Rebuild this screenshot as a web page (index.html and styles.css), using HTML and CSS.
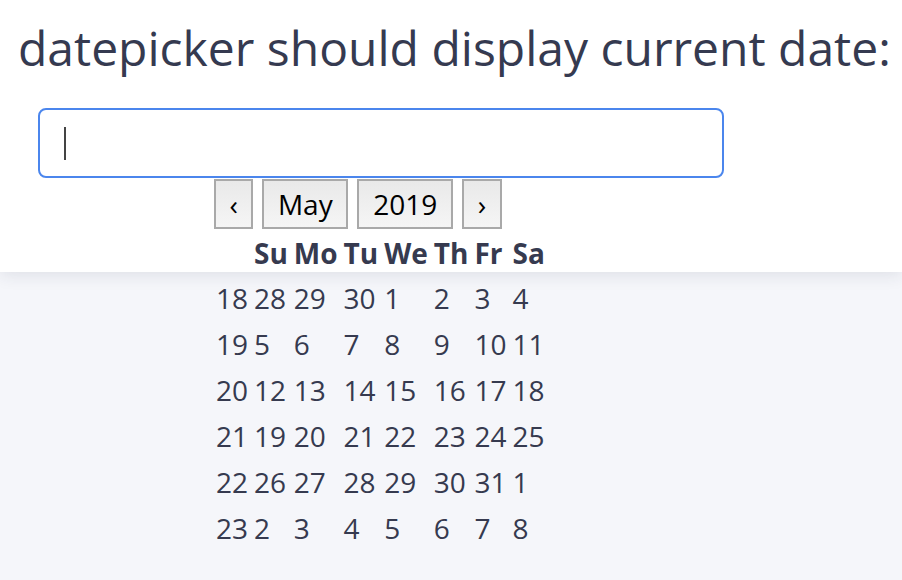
FILE: index.html
```html
<!DOCTYPE html>
<html>
<head>
<meta charset="utf-8">
<link rel="stylesheet" href="styles.css">
</head>
<body>
<div class="panel">
  <h1 class="title">datepicker should display current date:</h1>
  <div class="field"><span class="caret"></span></div>
  <div class="picker">
    <div class="nav">
      <button class="btn btn-arrow">‹</button>
      <button class="btn btn-month">May</button>
      <button class="btn">2019</button>
      <button class="btn btn-arrow">›</button>
    </div>
    <table class="cal">
      <thead>
        <tr><th></th><th>Su</th><th>Mo</th><th>Tu</th><th>We</th><th>Th</th><th>Fr</th><th>Sa</th></tr>
      </thead>
      <tbody>
        <tr><td>18</td><td>28</td><td>29</td><td>30</td><td>1</td><td>2</td><td>3</td><td>4</td></tr>
        <tr><td>19</td><td>5</td><td>6</td><td>7</td><td>8</td><td>9</td><td>10</td><td>11</td></tr>
        <tr><td>20</td><td>12</td><td>13</td><td>14</td><td>15</td><td>16</td><td>17</td><td>18</td></tr>
        <tr><td>21</td><td>19</td><td>20</td><td>21</td><td>22</td><td>23</td><td>24</td><td>25</td></tr>
        <tr><td>22</td><td>26</td><td>27</td><td>28</td><td>29</td><td>30</td><td>31</td><td>1</td></tr>
        <tr><td>23</td><td>2</td><td>3</td><td>4</td><td>5</td><td>6</td><td>7</td><td>8</td></tr>
      </tbody>
    </table>
  </div>
</div>
</body>
</html>
```
FILE: styles.css
```css
html, body {
  margin: 0;
  padding: 0;
}
body {
  background: #f5f6fa;
  font-family: "Open Sans", "Noto Sans", sans-serif;
  color: #363a4f;
  width: 902px;
  height: 580px;
  overflow: hidden;
}
.panel {
  position: relative;
  background: #ffffff;
  height: 272px;
  box-shadow: 0 3px 16px rgba(40, 45, 70, 0.11);
  padding-top: 15px;
  box-sizing: border-box;
}
.title {
  margin: 0;
  padding-left: 18px;
  font-size: 48px;
  font-weight: 400;
  line-height: 66px;
  color: #353a50;
  white-space: nowrap;
}
.field {
  margin: 27px 0 0 38px;
  width: 686px;
  height: 70px;
  box-sizing: border-box;
  border: 2px solid #4b86ed;
  border-radius: 8px;
  display: flex;
  align-items: center;
  padding-left: 24px;
}
.caret {
  display: block;
  width: 2px;
  height: 33px;
  background: #444;
}
.picker {
  position: absolute;
  left: 214px;
  top: 179px;
}
.nav {
  display: flex;
  gap: 9px;
}
.btn {
  font-family: "Open Sans", "Noto Sans", sans-serif;
  font-size: 28px;
  line-height: 38px;
  color: #000;
  background: linear-gradient(#e9e9e9, #f5f5f5);
  border: 2px solid #a9a9a9;
  border-radius: 0;
  padding: 4px 14px;
  margin: 0;
}
.btn-month {
  padding: 4px 13.5px;
}
.btn-arrow {
  padding: 4px 13.5px;
}
.cal {
  border-collapse: separate;
  border-spacing: 0;
  margin-left: 0;
  font-size: 28px;
  color: #363a4f;
}
.cal th, .cal td {
  padding: 2px 4px 2px 2px;
  line-height: 42px;
  text-align: left;
}
.cal thead th {
  padding-top: 3px;
  padding-bottom: 1px;
  font-weight: 700;
}
```
